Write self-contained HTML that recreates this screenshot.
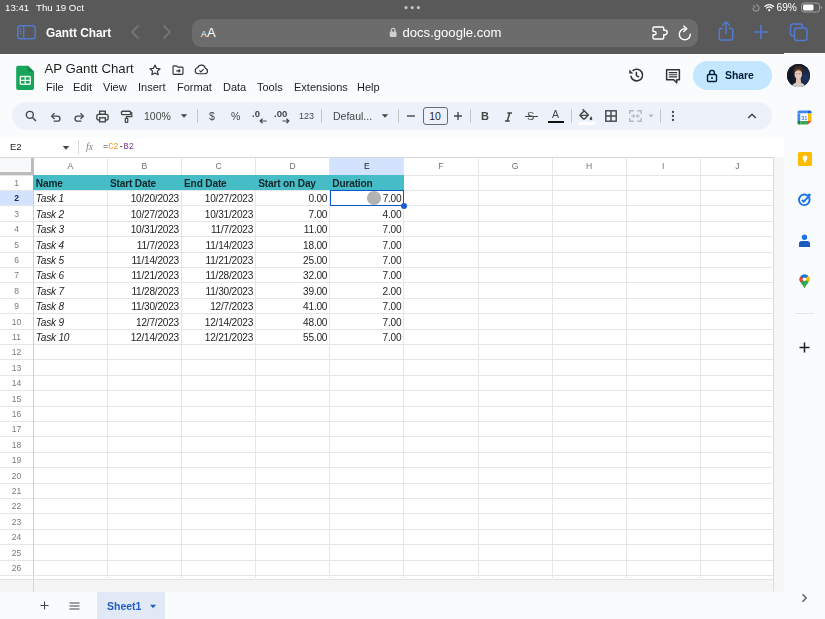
<!DOCTYPE html>
<html><head><meta charset="utf-8">
<style>
*{box-sizing:border-box;margin:0;padding:0}
html,body{width:825px;height:619px;overflow:hidden;background:#f9fbfd;font-family:"Liberation Sans",sans-serif;color:#1f1f1f}
body{position:relative}
div,span,svg{position:absolute}
/* safari */
#safari{left:0;top:0;width:825px;height:53.700px;background:#595959}
#safari .t{color:#fff;font-size:9.700px;top:1px;line-height:13px;white-space:nowrap}
#url{left:192px;top:18.500px;width:506px;height:28px;border-radius:9px;background:#6c6c6c}
#url .u{left:0;width:100%;text-align:center;color:#fff;font-size:13.100px;line-height:28.600px;padding-left:14px}
/* sheets header */
#title{left:44.500px;top:60px;font-size:13.200px;line-height:17px;color:#1f1f1f;white-space:nowrap}
.menu{top:81px;font-size:11px;line-height:13px;color:#1f1f1f;white-space:nowrap}
#share{left:693px;top:61px;width:79px;height:29px;border-radius:15px;background:#c2e7ff}
#share .s{left:32px;top:0;line-height:29px;font-size:10.400px;font-weight:bold;color:#1f2d3d;color:#001d35}
#avatar{z-index:5;left:787px;top:64px;width:23px;height:23px;border-radius:50%;background:#2a2526;overflow:hidden}
/* toolbar */
#tb{left:12px;top:101.600px;width:760px;height:28.600px;border-radius:14.300px;background:#edf2fa}
#tbi{left:0;top:-0.600px;width:760px;height:30px}
.ti{color:#444746;font-size:10.5px;line-height:30px;top:0;white-space:nowrap}
.sep{top:8px;width:1px;height:14px;background:#c7c7c7}
/* formula bar */
#fbar{left:0;top:137px;width:784px;height:20px;background:#fff}
#fbar .n{left:10px;top:0;line-height:20px;font-size:9.5px;color:#1f1f1f}
/* grid */
#gridbg{left:0;top:157px;width:784px;height:433px;background:#fff}
.colhdr{background:#fff}
.ch{top:157.500px;height:17px;line-height:17px;text-align:center;font-size:8.600px;color:#6d7175}
.ch.sel{background:#d3e3fd;color:#1f1f1f}
.rh{left:0;width:33px;text-align:center;font-size:8.500px;color:#777b7e;background:#fff}
.rh.sel{background:#d3e3fd;color:#0b2a66;font-weight:bold}
.teal{background:#46bdc6}
.vl{width:1px;background:#e6e6e6}
.hl{left:0;height:1px;background:#e6e6e6}
.corner{left:0;top:157.500px;width:33.500px;height:17.500px;background:#f8f9fa;border-right:3px solid #bcbcbc;border-bottom:3.500px solid #bcbcbc}
#topline{left:0;top:157px;width:784px;height:1px;background:#d6d6d6}
.cell{font-size:10.100px;letter-spacing:-0.220px;white-space:nowrap;color:#1f1f1f;padding:0 2.5px;overflow:hidden}
.cell.hd{font-weight:bold;letter-spacing:-0.150px;color:#10272b}
.cell.it{font-style:italic}
.cell.num{text-align:right}
#selbox{border:1.5px solid #1a73e8;border:1.5px solid #0b57d0}
.cell,.menu,.ti,#title,.rh,.ch,#safari .t,#url .u,#share .s,#tab .s,#fbar div{filter:blur(0.300px)}
svg{filter:blur(0.250px)}
/* side panel */
#side{left:784px;top:53px;width:41px;height:566px;background:#f9fbfd}
/* bottom */
#hscroll{left:0;top:579px;width:784px;height:13px;background:#f5f5f5;border-top:1px solid #e2e2e2}
#hs2{left:33px;top:576px;width:1px;height:16px;background:#d8d8d8}
#vscroll{left:772.500px;top:157px;width:11px;height:434px;background:#f6f6f6;border-left:1px solid #dcdcdc}
#bottom{left:0;top:591.500px;width:784px;height:27.500px;background:#f9fbfd}
#tab{left:97px;top:0px;width:68px;height:29px;background:#e1e9f7}
#tab .s{left:10px;top:0;line-height:29px;font-size:10.500px;font-weight:bold;color:#1f5fc4}
</style></head><body>

<div id="safari">
  <div class="t" style="left:5px">13:41</div>
  <div class="t" style="left:36px">Thu 19 Oct</div>
  <svg style="left:400px;top:3px" width="24" height="9" viewBox="0 0 24 9"><circle cx="6" cy="4.600" r="1.600" fill="#c4c4c4"/><circle cx="12.200" cy="4.600" r="1.600" fill="#c4c4c4"/><circle cx="18.400" cy="4.600" r="1.600" fill="#c4c4c4"/></svg>
  <!-- rotation lock, wifi, battery -->
  <svg style="left:751px;top:3px" width="10" height="10" viewBox="0 0 10 10"><path d="M2 5a3 3 0 1 0 3-3" fill="none" stroke="#8e8e8e" stroke-width="1.3"/><path d="M2.2 1.5v3h3z" fill="#8e8e8e"/></svg>
  <svg style="left:763.500px;top:3px" width="10.500" height="9" viewBox="0 0 13 11"><path d="M1 4.2a8 8 0 0 1 11 0" fill="none" stroke="#fff" stroke-width="1.5" stroke-linecap="round"/><path d="M3.1 6.3a5 5 0 0 1 6.8 0" fill="none" stroke="#fff" stroke-width="1.5" stroke-linecap="round"/><circle cx="6.5" cy="8.8" r="1.3" fill="#fff"/></svg>
  <div class="t" style="left:776.500px;top:1px;font-size:10.200px">69%</div>
  <svg style="left:801px;top:2px" width="22" height="11" viewBox="0 0 22 11"><rect x="0.5" y="1" width="18" height="9" rx="2.6" fill="none" stroke="#a0a0a0" stroke-width="1"/><rect x="2" y="2.5" width="10.5" height="6" rx="1.4" fill="#fff"/><path d="M19.8 4v3c1-.2 1.3-1 1.300-1.500S20.800 4.200 19.800 4z" fill="#a0a0a0"/></svg>
  <!-- sidebar icon -->
  <svg style="left:17px;top:25px" width="19" height="15" viewBox="0 0 19 15"><rect x="0.800" y="0.800" width="17.400" height="13" rx="2.600" fill="none" stroke="#4f7bd2" stroke-width="1.500"/><path d="M6.700 0.800v13" stroke="#4f7bd2" stroke-width="1.300"/><path d="M2.900 4h1.800M2.900 6.300h1.800M2.900 8.600h1.800" stroke="#4f7bd2" stroke-width="0.900" stroke-linecap="round"/></svg>
  <div class="t" style="left:46px;top:25.500px;font-size:11.85px;font-weight:bold;line-height:15px">Gantt Chart</div>
  <svg style="left:129px;top:24px" width="12" height="16" viewBox="0 0 12 16"><path d="M9 2L3 8l6 6" fill="none" stroke="#747474" stroke-width="1.800" stroke-linecap="round" stroke-linejoin="round"/></svg>
  <svg style="left:161px;top:24px" width="12" height="16" viewBox="0 0 12 16"><path d="M3 2l6 6-6 6" fill="none" stroke="#747474" stroke-width="1.800" stroke-linecap="round" stroke-linejoin="round"/></svg>
  <div id="url"><div class="u">docs.google.com</div>
    <div style="left:9px;top:0;line-height:31px;color:#fff;font-size:8.500px">A</div>
    <div style="left:15px;top:0;line-height:28px;color:#fff;font-size:13px">A</div>
    <svg style="left:197px;top:8px" width="8.300" height="11" viewBox="0 0 9 12"><rect x="0.800" y="5" width="7.400" height="6" rx="1.200" fill="#cfcfcf"/><path d="M2.500 5.500V3.500a2 2 0 0 1 4 0v2" fill="none" stroke="#cfcfcf" stroke-width="1.300"/></svg>
    <!-- puzzle -->
    <svg style="left:459px;top:6px" width="18" height="16" viewBox="0 0 18 16"><path d="M2 3.200a1.200 1.200 0 0 1 1.200-1.200h8.300a1.200 1.200 0 0 1 1.200 1.200v2.100h1.300a2 2 0 0 1 0 4.400h-1.300v3.100a1.200 1.200 0 0 1-1.200 1.200H3.200a1.200 1.200 0 0 1-1.200-1.200v-3h1.500a1.600 1.600 0 0 0 0-3.300H2z" fill="none" stroke="#fff" stroke-width="1.400" stroke-linejoin="round"/></svg>
    <!-- reload -->
    <svg style="left:485px;top:6px" width="16" height="17" viewBox="0 0 16 17"><path d="M13.300 9.300a5.500 5.500 0 1 1-5.500-5.500" fill="none" stroke="#fff" stroke-width="1.400" stroke-linecap="round"/><path d="M6.800 1l3 2.800-3 2.800" fill="none" stroke="#fff" stroke-width="1.400" stroke-linecap="round" stroke-linejoin="round"/></svg>
  </div>
  <!-- share -->
  <svg style="left:717px;top:20px" width="18" height="22" viewBox="0 0 18 22"><path d="M5.500 8.500H3.800a1.500 1.500 0 0 0-1.500 1.500v8.500a1.500 1.500 0 0 0 1.500 1.500h10.400a1.500 1.500 0 0 0 1.500-1.500V10a1.500 1.500 0 0 0-1.500-1.500h-1.700" fill="none" stroke="#4f7bd2" stroke-width="1.500" stroke-linecap="round"/><path d="M9 13.500V2.200M5.800 5L9 1.800 12.200 5" fill="none" stroke="#4f7bd2" stroke-width="1.500" stroke-linecap="round" stroke-linejoin="round"/></svg>
  <svg style="left:753px;top:24px" width="16" height="16" viewBox="0 0 16 16"><path d="M8 1.500v13M1.500 8h13" stroke="#4f7bd2" stroke-width="1.600" stroke-linecap="round"/></svg>
  <svg style="left:789px;top:22px" width="20" height="20" viewBox="0 0 20 20"><rect x="1.500" y="2" width="12" height="12" rx="2.500" fill="#595959" stroke="#4f7bd2" stroke-width="1.500"/><rect x="5.500" y="6" width="12.500" height="12.500" rx="2.500" fill="#595959" stroke="#4f7bd2" stroke-width="1.500"/></svg>
</div>

<div id="title">AP Gantt Chart</div>
<div class="menu" style="left:46px">File</div>
<div class="menu" style="left:73px">Edit</div>
<div class="menu" style="left:103px">View</div>
<div class="menu" style="left:138px">Insert</div>
<div class="menu" style="left:177px">Format</div>
<div class="menu" style="left:223px">Data</div>
<div class="menu" style="left:257px">Tools</div>
<div class="menu" style="left:294px">Extensions</div>
<div class="menu" style="left:357px">Help</div>
<!-- sheets logo -->
<svg style="left:15.500px;top:64.500px" width="19" height="26" viewBox="0 0 20 27"><path d="M2.200 0.500h10.300l6.500 6.500v17a2 2 0 0 1-2 2H2.200a2 2 0 0 1-2-2V2.500a2 2 0 0 1 2-2z" fill="#17a45b"/><path d="M12.500 0.500l6.500 6.500h-4.800a1.700 1.700 0 0 1-1.700-1.700z" fill="#0f8a4a"/><rect x="4.500" y="12" width="10.500" height="8" rx="0.800" fill="none" stroke="#e8f7ee" stroke-width="1.500"/><path d="M4.500 16h10.500M9.750 12v8" stroke="#e8f7ee" stroke-width="1.400"/></svg>
<!-- star, move, cloud -->
<svg style="left:148px;top:63px" width="14" height="14" viewBox="0 0 24 24"><path d="M12 3.500l2.600 5.600 6.100.7-4.500 4.200 1.200 6-5.400-3-5.400 3 1.200-6-4.500-4.200 6.100-.7z" fill="none" stroke="#333" stroke-width="2" stroke-linejoin="round"/></svg>
<svg style="left:171px;top:63px" width="14" height="14" viewBox="0 0 24 24"><path d="M3.500 6.500a1.500 1.500 0 0 1 1.500-1.500h4.500l2 2.200h7.500a1.500 1.500 0 0 1 1.500 1.500v9.300a1.500 1.500 0 0 1-1.500 1.500H5a1.500 1.500 0 0 1-1.500-1.500z" fill="none" stroke="#333" stroke-width="2" stroke-linejoin="round"/><path d="M9 13.500h6M13 11l2.500 2.500L13 16" fill="none" stroke="#333" stroke-width="1.800"/></svg>
<svg style="left:193px;top:62px" width="17" height="15" viewBox="0 0 28 24"><path d="M8.500 19a5 5 0 0 1-.8-9.900 6.500 6.500 0 0 1 12.600 1.200 4.400 4.400 0 0 1-.5 8.700z" fill="none" stroke="#333" stroke-width="2" stroke-linejoin="round"/><path d="M10.500 13.500l2.500 2.500 4.500-4.500" fill="none" stroke="#333" stroke-width="1.800"/></svg>
<!-- history -->
<svg style="left:627px;top:66px" width="18" height="18" viewBox="0 0 24 24"><path d="M5.200 13a7.800 7.800 0 1 0 2.300-6.500" fill="none" stroke="#333" stroke-width="2.200"/><path d="M3 4.500v5.500h5.500z" fill="#333"/><path d="M12.500 7.500v5.200l3.600 2.200" fill="none" stroke="#333" stroke-width="2"/></svg>
<!-- comment -->
<svg style="left:664px;top:67px" width="18" height="18" viewBox="0 0 24 24"><path d="M3.500 3.500h17v13.500h-3.500v4l-4-4H3.500z" fill="none" stroke="#333" stroke-width="2" stroke-linejoin="round"/><path d="M6.500 7.500h11M6.500 10.300h11M6.500 13.100h11" stroke="#333" stroke-width="1.500"/></svg>
<div id="share"><div class="s">Share</div>
<svg style="left:13px;top:8px" width="12" height="14" viewBox="0 0 12 14"><rect x="1.500" y="5.500" width="9" height="7" rx="1.200" fill="none" stroke="#001d35" stroke-width="1.400"/><path d="M3.600 5.500V3.800a2.400 2.400 0 0 1 4.800 0v1.700" fill="none" stroke="#001d35" stroke-width="1.400"/><circle cx="6" cy="9" r="1" fill="#001d35"/></svg>
</div>
<div id="avatar">
<svg style="left:0;top:0" width="23" height="23" viewBox="0 0 23 23"><defs><radialGradient id="avg" cx="80%" cy="60%" r="60%"><stop offset="0" stop-color="#1d3560"/><stop offset="1" stop-color="#131829"/></radialGradient></defs><rect width="23" height="23" fill="url(#avg)"/><path d="M6.300 9c-.6-5.500 2-7.300 5-7.300s5.600 1.800 5 7.300z" fill="#3f2a22"/><ellipse cx="11.300" cy="10.200" rx="3.700" ry="4.900" fill="#e8c6b9"/><path d="M7.800 8.300c.3-2.600 1.800-3.400 3.500-3.400s3.200.8 3.500 3.400c-1-1.200-2-1.700-3.500-1.700s-2.500.5-3.500 1.700z" fill="#6b4a3c"/><path d="M9.300 13.500h4.200l.6 5 2.600 4.500H6.300l2.500-4.500z" fill="#e3c0b2"/><path d="M4.500 23c.8-2.800 2.700-3.800 4.600-4.300l2.300 2 2.400-2c1.900.5 3.800 1.500 4.600 4.300z" fill="#cfcac8"/><circle cx="9.900" cy="9.700" r=".55" fill="#6a4335"/><circle cx="12.800" cy="9.700" r=".55" fill="#6a4335"/></svg>
</div>

<div id="tb"><div id="tbi">
  <!-- search -->
  <svg style="left:12px;top:8px" width="14" height="14" viewBox="0 0 24 24"><circle cx="10" cy="10" r="6" fill="none" stroke="#444746" stroke-width="2.400"/><path d="M14.500 14.500l6 6" stroke="#444746" stroke-width="2.600"/></svg>
  <!-- undo -->
  <svg style="left:37px;top:9px" width="14" height="14" viewBox="0 0 24 24"><path d="M6 10.500h8.500a4.300 4.300 0 0 1 0 8.600H8" fill="none" stroke="#444746" stroke-width="2.200"/><path d="M9.500 5.500L4.500 10.500l5 5" fill="none" stroke="#444746" stroke-width="2.200"/></svg>
  <!-- redo -->
  <svg style="left:60px;top:9px" width="14" height="14" viewBox="0 0 24 24"><path d="M18 10.500H9.500a4.300 4.300 0 0 0 0 8.600H16" fill="none" stroke="#444746" stroke-width="2.200"/><path d="M14.500 5.500l5 5-5 5" fill="none" stroke="#444746" stroke-width="2.200"/></svg>
  <!-- print -->
  <svg style="left:83px;top:8px" width="15" height="15" viewBox="0 0 24 24"><rect x="3" y="8.500" width="18" height="9" rx="2.500" fill="none" stroke="#444746" stroke-width="2.200"/><rect x="7.500" y="3.500" width="9" height="5" fill="none" stroke="#444746" stroke-width="2.200"/><rect x="7.500" y="14" width="9" height="6.500" fill="#edf2fa" stroke="#444746" stroke-width="2.200"/></svg>
  <!-- paint format -->
  <svg style="left:107px;top:8px" width="15" height="15" viewBox="0 0 24 24"><rect x="4" y="3.500" width="14.500" height="5.500" rx="1.500" fill="none" stroke="#444746" stroke-width="2.200"/><path d="M18.500 6.200h2v6h-8.500v3" fill="none" stroke="#444746" stroke-width="2"/><rect x="10" y="15" width="4" height="6.500" rx="1" fill="none" stroke="#444746" stroke-width="2"/></svg>
  <div class="ti" style="left:132px">100%</div>
  <svg class="dd" style="left:168px;top:12px" width="8" height="6" viewBox="0 0 8 6"><path d="M0.800 1.200h6.400L4 4.800z" fill="#444746"/></svg>
  <div class="sep" style="left:185px"></div>
  <div class="ti" style="left:197px">$</div>
  <div class="ti" style="left:219px">%</div>
  <div class="ti" style="left:240px;font-size:9.500px;font-weight:bold;top:-2px">.0</div>
  <svg style="left:247px;top:17px" width="8" height="6" viewBox="0 0 8 6"><path d="M7.500 3H1.500M3.500 0.800L1.200 3l2.300 2.200" fill="none" stroke="#444746" stroke-width="1.200"/></svg>
  <div class="ti" style="left:262px;font-size:9.500px;font-weight:bold;top:-2px">.00</div>
  <svg style="left:270px;top:17px" width="8" height="6" viewBox="0 0 8 6"><path d="M0.500 3H6.500M4.500 0.800L6.800 3 4.500 5.200" fill="none" stroke="#444746" stroke-width="1.200"/></svg>
  <div class="ti" style="left:287px;font-size:9px">123</div>
  <div class="sep" style="left:309px"></div>
  <div class="ti" style="left:321px">Defaul...</div>
  <svg class="dd" style="left:369px;top:12px" width="8" height="6" viewBox="0 0 8 6"><path d="M0.800 1.200h6.400L4 4.800z" fill="#444746"/></svg>
  <div class="sep" style="left:386px"></div>
  <svg style="left:394px;top:10px" width="10" height="10" viewBox="0 0 10 10"><path d="M1 5h8" stroke="#444746" stroke-width="1.400"/></svg>
  <div style="left:410.500px;top:6px;width:25px;height:18px;border:1px solid #6b6e6d;border-radius:3px;text-align:center;line-height:16px;font-size:10.500px;color:#1f1f1f">10</div>
  <svg style="left:441px;top:10px" width="10" height="10" viewBox="0 0 10 10"><path d="M1 5h8M5 1v8" stroke="#444746" stroke-width="1.400"/></svg>
  <div class="sep" style="left:458px"></div>
  <div class="ti" style="left:469px;font-weight:bold;font-size:11px">B</div>
  <svg style="left:492px;top:10.500px" width="9" height="10" viewBox="0 0 9 10"><path d="M3.300 1h4.700M1 9h4.700M5.700 1L3.300 9" fill="none" stroke="#444746" stroke-width="1.500"/></svg>
  <div class="ti" style="left:515px;font-size:11px">S</div>
  <div style="left:512.500px;top:15px;width:13px;height:1.300px;background:#444746"></div>
  <div class="ti" style="left:540px;font-size:10.500px;top:-2px">A</div>
  <div style="left:536px;top:19.500px;width:16px;height:2.500px;background:#111"></div>
  <div class="sep" style="left:559px"></div>
  <!-- fill -->
  <svg style="left:566px;top:6px" width="16" height="16" viewBox="0 0 24 24"><path d="M7 3.500l8.500 8.500-5.500 5.500a1.500 1.500 0 0 1-2.100 0L3.700 13.300a1.500 1.500 0 0 1 0-2.100l5.600-5.400" fill="none" stroke="#444746" stroke-width="2.200"/><path d="M4 12.500h11z" stroke="#444746" stroke-width="2"/><path d="M19.500 14s-2 2.300-2 3.700a2 2 0 0 0 4 0c0-1.400-2-3.700-2-3.700z" fill="#444746"/></svg>
  <div style="left:566px;top:21px;width:17px;height:3px;background:#fff"></div>
  <!-- borders -->
  <svg style="left:593px;top:9px" width="12" height="12" viewBox="0 0 12 12"><rect x="0.800" y="0.800" width="10.400" height="10.400" fill="none" stroke="#444746" stroke-width="1.400"/><path d="M6 0.800v10.400M0.800 6h10.400" stroke="#444746" stroke-width="1.400"/></svg>
  <!-- merge -->
  <svg style="left:617px;top:9px" width="13" height="12" viewBox="0 0 13 12"><path d="M0.800 4V0.800h4M8.200 0.800h4V4M12.200 8v3.200h-4M4.800 11.200h-4V8" fill="none" stroke="#b4b8bd" stroke-width="1.400"/><path d="M2 6h3M11 6H8M4 4.500L5.500 6 4 7.500M9 4.500L7.500 6 9 7.500" fill="none" stroke="#b4b8bd" stroke-width="1.100"/></svg>
  <svg class="dd" style="left:635px;top:12px" width="8" height="6" viewBox="0 0 8 6"><path d="M1.200 1.500h5.600L4 4.600z" fill="#b4b8bd"/></svg>
  <div class="sep" style="left:648px"></div>
  <svg style="left:658px;top:9px" width="6" height="12" viewBox="0 0 6 12"><circle cx="3" cy="2" r="1.150" fill="#444746"/><circle cx="3" cy="6" r="1.150" fill="#444746"/><circle cx="3" cy="10" r="1.150" fill="#444746"/></svg>
  <svg style="left:735px;top:11px" width="10" height="8" viewBox="0 0 10 8"><path d="M1.200 6L5 2.200 8.800 6" fill="none" stroke="#444746" stroke-width="1.500"/></svg>
</div></div>

<div id="fbar"><div class="n">E2</div>
<svg style="left:62px;top:8px" width="8" height="6" viewBox="0 0 8 6"><path d="M0.800 1h6.400L4 4.800z" fill="#444746"/></svg>
<div style="left:78px;top:3px;width:1px;height:14px;background:#d5d8dc"></div>
<div style="left:86px;top:0;line-height:19px;font-size:10px;font-style:italic;font-family:'Liberation Serif',serif;color:#80868b">fx</div>
<div style="left:103px;top:0;line-height:20px;font-size:8.550px;font-family:'Liberation Mono',monospace;white-space:nowrap;color:#1f1f1f">=<span style="position:static;color:#f7981d">C2</span>-<span style="position:static;color:#7e3794">B2</span></div>
</div>
<div id="gridbg"></div>
<div class="colhdr" style="left:0;top:157px;width:774.5px;height:18px"></div>
<div class="ch" style="left:33.3px;width:74.12px">A</div>
<div class="ch" style="left:107.42px;width:74.12px">B</div>
<div class="ch" style="left:181.54px;width:74.12px">C</div>
<div class="ch" style="left:255.66px;width:74.12px">D</div>
<div class="ch sel" style="left:329.78px;width:74.12px">E</div>
<div class="ch" style="left:403.9px;width:74.12px">F</div>
<div class="ch" style="left:478.02px;width:74.12px">G</div>
<div class="ch" style="left:552.14px;width:74.12px">H</div>
<div class="ch" style="left:626.26px;width:74.12px">I</div>
<div class="ch" style="left:700.38px;width:74.12px">J</div>
<div class="rh" style="top:175px;height:15.4px;line-height:16.8px">1</div>
<div class="rh sel" style="top:190.4px;height:15.4px;line-height:16.8px">2</div>
<div class="rh" style="top:205.8px;height:15.4px;line-height:16.8px">3</div>
<div class="rh" style="top:221.2px;height:15.4px;line-height:16.8px">4</div>
<div class="rh" style="top:236.6px;height:15.4px;line-height:16.8px">5</div>
<div class="rh" style="top:252px;height:15.4px;line-height:16.8px">6</div>
<div class="rh" style="top:267.4px;height:15.4px;line-height:16.8px">7</div>
<div class="rh" style="top:282.8px;height:15.4px;line-height:16.8px">8</div>
<div class="rh" style="top:298.2px;height:15.4px;line-height:16.8px">9</div>
<div class="rh" style="top:313.6px;height:15.4px;line-height:16.8px">10</div>
<div class="rh" style="top:329px;height:15.4px;line-height:16.8px">11</div>
<div class="rh" style="top:344.4px;height:15.4px;line-height:16.8px">12</div>
<div class="rh" style="top:359.8px;height:15.4px;line-height:16.8px">13</div>
<div class="rh" style="top:375.2px;height:15.4px;line-height:16.8px">14</div>
<div class="rh" style="top:390.6px;height:15.4px;line-height:16.8px">15</div>
<div class="rh" style="top:406px;height:15.4px;line-height:16.8px">16</div>
<div class="rh" style="top:421.4px;height:15.4px;line-height:16.8px">17</div>
<div class="rh" style="top:436.8px;height:15.4px;line-height:16.8px">18</div>
<div class="rh" style="top:452.2px;height:15.4px;line-height:16.8px">19</div>
<div class="rh" style="top:467.6px;height:15.4px;line-height:16.8px">20</div>
<div class="rh" style="top:483px;height:15.4px;line-height:16.8px">21</div>
<div class="rh" style="top:498.4px;height:15.4px;line-height:16.8px">22</div>
<div class="rh" style="top:513.8px;height:15.4px;line-height:16.8px">23</div>
<div class="rh" style="top:529.2px;height:15.4px;line-height:16.8px">24</div>
<div class="rh" style="top:544.6px;height:15.4px;line-height:16.8px">25</div>
<div class="rh" style="top:560px;height:15.4px;line-height:16.8px">26</div>
<div class="vl" style="left:32.8px;top:157px;height:421.4px"></div>
<div class="vl" style="left:106.92px;top:157px;height:421.4px"></div>
<div class="vl" style="left:181.04px;top:157px;height:421.4px"></div>
<div class="vl" style="left:255.16px;top:157px;height:421.4px"></div>
<div class="vl" style="left:329.28px;top:157px;height:421.4px"></div>
<div class="vl" style="left:403.4px;top:157px;height:421.4px"></div>
<div class="vl" style="left:477.52px;top:157px;height:421.4px"></div>
<div class="vl" style="left:551.64px;top:157px;height:421.4px"></div>
<div class="vl" style="left:625.76px;top:157px;height:421.4px"></div>
<div class="vl" style="left:699.88px;top:157px;height:421.4px"></div>
<div class="vl" style="left:774px;top:157px;height:421.4px"></div>
<div class="hl" style="top:174.5px;width:773px"></div>
<div class="hl" style="top:189.9px;width:773px"></div>
<div class="hl" style="top:205.3px;width:773px"></div>
<div class="hl" style="top:220.7px;width:773px"></div>
<div class="hl" style="top:236.1px;width:773px"></div>
<div class="hl" style="top:251.5px;width:773px"></div>
<div class="hl" style="top:266.9px;width:773px"></div>
<div class="hl" style="top:282.3px;width:773px"></div>
<div class="hl" style="top:297.7px;width:773px"></div>
<div class="hl" style="top:313.1px;width:773px"></div>
<div class="hl" style="top:328.5px;width:773px"></div>
<div class="hl" style="top:343.9px;width:773px"></div>
<div class="hl" style="top:359.3px;width:773px"></div>
<div class="hl" style="top:374.7px;width:773px"></div>
<div class="hl" style="top:390.1px;width:773px"></div>
<div class="hl" style="top:405.5px;width:773px"></div>
<div class="hl" style="top:420.9px;width:773px"></div>
<div class="hl" style="top:436.3px;width:773px"></div>
<div class="hl" style="top:451.7px;width:773px"></div>
<div class="hl" style="top:467.1px;width:773px"></div>
<div class="hl" style="top:482.5px;width:773px"></div>
<div class="hl" style="top:497.9px;width:773px"></div>
<div class="hl" style="top:513.3px;width:773px"></div>
<div class="hl" style="top:528.7px;width:773px"></div>
<div class="hl" style="top:544.1px;width:773px"></div>
<div class="hl" style="top:559.5px;width:773px"></div>
<div class="hl" style="top:574.9px;width:773px"></div>
<div class="vl" style="left:32.8px;top:175px;height:400.4px;background:#cfcfcf"></div>
<div class="teal" style="left:32.8px;top:174.7px;width:371.1px;height:15.7px"></div>
<div class="corner"></div>
<div class="cell hd" style="left:33.3px;top:175px;width:74.12px;height:15.4px;line-height:17.6px">Name</div>
<div class="cell hd" style="left:107.42px;top:175px;width:74.12px;height:15.4px;line-height:17.6px">Start Date</div>
<div class="cell hd" style="left:181.54px;top:175px;width:74.12px;height:15.4px;line-height:17.6px">End Date</div>
<div class="cell hd" style="left:255.66px;top:175px;width:74.12px;height:15.4px;line-height:17.6px">Start on Day</div>
<div class="cell hd" style="left:329.78px;top:175px;width:74.12px;height:15.4px;line-height:17.6px">Duration</div>
<div class="cell it" style="left:33.3px;top:190.4px;width:74.12px;height:15.4px;line-height:17.6px">Task 1</div>
<div class="cell num" style="left:107.42px;top:190.4px;width:74.12px;height:15.4px;line-height:17.6px">10/20/2023</div>
<div class="cell num" style="left:181.54px;top:190.4px;width:74.12px;height:15.4px;line-height:17.6px">10/27/2023</div>
<div class="cell num" style="left:255.66px;top:190.4px;width:74.12px;height:15.4px;line-height:17.6px">0.00</div>
<div class="cell it" style="left:33.3px;top:205.8px;width:74.12px;height:15.4px;line-height:17.6px">Task 2</div>
<div class="cell num" style="left:107.42px;top:205.8px;width:74.12px;height:15.4px;line-height:17.6px">10/27/2023</div>
<div class="cell num" style="left:181.54px;top:205.8px;width:74.12px;height:15.4px;line-height:17.6px">10/31/2023</div>
<div class="cell num" style="left:255.66px;top:205.8px;width:74.12px;height:15.4px;line-height:17.6px">7.00</div>
<div class="cell num" style="left:329.78px;top:205.8px;width:74.12px;height:15.4px;line-height:17.6px">4.00</div>
<div class="cell it" style="left:33.3px;top:221.2px;width:74.12px;height:15.4px;line-height:17.6px">Task 3</div>
<div class="cell num" style="left:107.42px;top:221.2px;width:74.12px;height:15.4px;line-height:17.6px">10/31/2023</div>
<div class="cell num" style="left:181.54px;top:221.2px;width:74.12px;height:15.4px;line-height:17.6px">11/7/2023</div>
<div class="cell num" style="left:255.66px;top:221.2px;width:74.12px;height:15.4px;line-height:17.6px">11.00</div>
<div class="cell num" style="left:329.78px;top:221.2px;width:74.12px;height:15.4px;line-height:17.6px">7.00</div>
<div class="cell it" style="left:33.3px;top:236.6px;width:74.12px;height:15.4px;line-height:17.6px">Task 4</div>
<div class="cell num" style="left:107.42px;top:236.6px;width:74.12px;height:15.4px;line-height:17.6px">11/7/2023</div>
<div class="cell num" style="left:181.54px;top:236.6px;width:74.12px;height:15.4px;line-height:17.6px">11/14/2023</div>
<div class="cell num" style="left:255.66px;top:236.6px;width:74.12px;height:15.4px;line-height:17.6px">18.00</div>
<div class="cell num" style="left:329.78px;top:236.6px;width:74.12px;height:15.4px;line-height:17.6px">7.00</div>
<div class="cell it" style="left:33.3px;top:252px;width:74.12px;height:15.4px;line-height:17.6px">Task 5</div>
<div class="cell num" style="left:107.42px;top:252px;width:74.12px;height:15.4px;line-height:17.6px">11/14/2023</div>
<div class="cell num" style="left:181.54px;top:252px;width:74.12px;height:15.4px;line-height:17.6px">11/21/2023</div>
<div class="cell num" style="left:255.66px;top:252px;width:74.12px;height:15.4px;line-height:17.6px">25.00</div>
<div class="cell num" style="left:329.78px;top:252px;width:74.12px;height:15.4px;line-height:17.6px">7.00</div>
<div class="cell it" style="left:33.3px;top:267.4px;width:74.12px;height:15.4px;line-height:17.6px">Task 6</div>
<div class="cell num" style="left:107.42px;top:267.4px;width:74.12px;height:15.4px;line-height:17.6px">11/21/2023</div>
<div class="cell num" style="left:181.54px;top:267.4px;width:74.12px;height:15.4px;line-height:17.6px">11/28/2023</div>
<div class="cell num" style="left:255.66px;top:267.4px;width:74.12px;height:15.4px;line-height:17.6px">32.00</div>
<div class="cell num" style="left:329.78px;top:267.4px;width:74.12px;height:15.4px;line-height:17.6px">7.00</div>
<div class="cell it" style="left:33.3px;top:282.8px;width:74.12px;height:15.4px;line-height:17.6px">Task 7</div>
<div class="cell num" style="left:107.42px;top:282.8px;width:74.12px;height:15.4px;line-height:17.6px">11/28/2023</div>
<div class="cell num" style="left:181.54px;top:282.8px;width:74.12px;height:15.4px;line-height:17.6px">11/30/2023</div>
<div class="cell num" style="left:255.66px;top:282.8px;width:74.12px;height:15.4px;line-height:17.6px">39.00</div>
<div class="cell num" style="left:329.78px;top:282.8px;width:74.12px;height:15.4px;line-height:17.6px">2.00</div>
<div class="cell it" style="left:33.3px;top:298.2px;width:74.12px;height:15.4px;line-height:17.6px">Task 8</div>
<div class="cell num" style="left:107.42px;top:298.2px;width:74.12px;height:15.4px;line-height:17.6px">11/30/2023</div>
<div class="cell num" style="left:181.54px;top:298.2px;width:74.12px;height:15.4px;line-height:17.6px">12/7/2023</div>
<div class="cell num" style="left:255.66px;top:298.2px;width:74.12px;height:15.4px;line-height:17.6px">41.00</div>
<div class="cell num" style="left:329.78px;top:298.2px;width:74.12px;height:15.4px;line-height:17.6px">7.00</div>
<div class="cell it" style="left:33.3px;top:313.6px;width:74.12px;height:15.4px;line-height:17.6px">Task 9</div>
<div class="cell num" style="left:107.42px;top:313.6px;width:74.12px;height:15.4px;line-height:17.6px">12/7/2023</div>
<div class="cell num" style="left:181.54px;top:313.6px;width:74.12px;height:15.4px;line-height:17.6px">12/14/2023</div>
<div class="cell num" style="left:255.66px;top:313.6px;width:74.12px;height:15.4px;line-height:17.6px">48.00</div>
<div class="cell num" style="left:329.78px;top:313.6px;width:74.12px;height:15.4px;line-height:17.6px">7.00</div>
<div class="cell it" style="left:33.3px;top:329px;width:74.12px;height:15.4px;line-height:17.6px">Task 10</div>
<div class="cell num" style="left:107.42px;top:329px;width:74.12px;height:15.4px;line-height:17.6px">12/14/2023</div>
<div class="cell num" style="left:181.54px;top:329px;width:74.12px;height:15.4px;line-height:17.6px">12/21/2023</div>
<div class="cell num" style="left:255.66px;top:329px;width:74.12px;height:15.4px;line-height:17.6px">55.00</div>
<div class="cell num" style="left:329.78px;top:329px;width:74.12px;height:15.4px;line-height:17.6px">7.00</div>
<div id="topline"></div>
<div id="selbox" style="left:329.78000000000003px;top:190.4px;width:74.500px;height:15.400px"></div>
<div style="left:367.400px;top:191px;width:13.600px;height:13.600px;border-radius:50%;background:#b3b3b3"></div>
<div class="cell num" style="left:329.800px;top:190.400px;width:74.120px;height:15.400px;line-height:17.600px;background:none">7.00</div>
<div style="left:401.200px;top:203.300px;width:6px;height:6px;border-radius:50%;background:#1a5fd0"></div>

<div id="side"><div style="left:0;top:-1px;width:41px;height:567px">
<!-- calendar -->
<svg style="left:13px;top:57.500px" width="15" height="15" viewBox="0 0 15 15"><rect x="0.500" y="0.500" width="14" height="14" rx="1.500" fill="#fff"/><path d="M0.500 3.500V2a1.500 1.500 0 0 1 1.500-1.500h9v3z" fill="#4285f4"/><path d="M11 0.500h2a1.500 1.500 0 0 1 1.500 1.500v1.500H11z" fill="#1967d2"/><path d="M0.500 3.500h3v7.500h-3z" fill="#4285f4"/><path d="M11 3.500h3.500v7.500H11z" fill="#fbbc04"/><path d="M0.500 11h3v3.500H2a1.500 1.500 0 0 1-1.500-1.500z" fill="#188038"/><path d="M3.500 11H11v3.500H3.500z" fill="#34a853"/><path d="M11 11h3.500L11 14.500z" fill="#ea4335"/><rect x="3.500" y="3.500" width="7.500" height="7.500" fill="#fff"/><text x="7.300" y="9.600" font-size="5.500" font-weight="bold" text-anchor="middle" fill="#4285f4" font-family="Liberation Sans">31</text></svg>
<!-- keep -->
<svg style="left:13.500px;top:99.500px" width="14" height="14" viewBox="0 0 14 14"><rect width="14" height="14" rx="1.500" fill="#fbbc04"/><circle cx="7" cy="6" r="2.400" fill="#fff"/><rect x="5.900" y="7.800" width="2.200" height="2.400" fill="#fff"/></svg>
<!-- tasks -->
<svg style="left:13px;top:140px" width="15" height="15" viewBox="0 0 15 15"><circle cx="7.300" cy="7.800" r="5.300" fill="none" stroke="#1a73e8" stroke-width="1.900"/><path d="M4.800 7.800l1.900 1.900 4.600-4.800" fill="none" stroke="#1a73e8" stroke-width="1.900"/><circle cx="12.300" cy="3" r="1.500" fill="#1a73e8"/></svg>
<!-- contacts -->
<svg style="left:14px;top:182px" width="13" height="14" viewBox="0 0 13 14"><circle cx="6.500" cy="3.300" r="2.700" fill="#1a73e8"/><path d="M1 13v-3.200a2.800 2.800 0 0 1 2.800-2.800h5.400a2.800 2.800 0 0 1 2.800 2.800V13z" fill="#185abc"/></svg>
<!-- maps -->
<svg style="left:15px;top:222px" width="11" height="15" viewBox="0 0 11 15"><path d="M5.500 0.500a5 5 0 0 1 5 5c0 3-3.500 5-5 9-1.500-4-5-6-5-9a5 5 0 0 1 5-5z" fill="#34a853"/><path d="M5.500 0.500a5 5 0 0 1 3.700 1.600L5.500 5.500 1.500 2.600A5 5 0 0 1 5.500 0.500z" fill="#1a73e8"/><path d="M1.500 2.600L5.500 5.500 1.300 8.200A5 5 0 0 1 1.500 2.600z" fill="#ea4335"/><path d="M9.200 2.100a5 5 0 0 1 .8 5.700L5.500 5.500z" fill="#fbbc04"/><circle cx="5.500" cy="5.300" r="1.800" fill="#fff"/></svg>
<div style="left:11px;top:261px;width:19px;height:1px;background:#e3e5e8"></div>
<svg style="left:15px;top:289.500px" width="11" height="11" viewBox="0 0 11 11"><path d="M5.500 0.500v10M0.500 5.500h10" stroke="#1f1f1f" stroke-width="1.500"/></svg>
<svg style="left:17px;top:541px" width="7" height="10" viewBox="0 0 7 10"><path d="M1.500 1.200L5.200 5 1.500 8.800" fill="none" stroke="#5f6368" stroke-width="1.500"/></svg>
</div></div>
<div id="hscroll"></div><div id="hs2"></div><div id="vscroll"></div>
<div id="bottom">
<svg style="left:39.500px;top:9.500px" width="9" height="9" viewBox="0 0 9 9"><path d="M4.500 0.500v8M0.500 4.500h8" stroke="#444746" stroke-width="1.100"/></svg>
<svg style="left:68.500px;top:10px" width="11" height="8" viewBox="0 0 11 8"><path d="M0.500 1h10M0.500 4h10M0.500 7h10" stroke="#444746" stroke-width="1.100"/></svg>
<div id="tab"><div class="s">Sheet1</div>
<svg style="left:52px;top:12.500px" width="8" height="5" viewBox="0 0 8 5"><path d="M1 0.800h6L4 4.200z" fill="#1f5fc4"/></svg>
</div></div>
</body></html>
